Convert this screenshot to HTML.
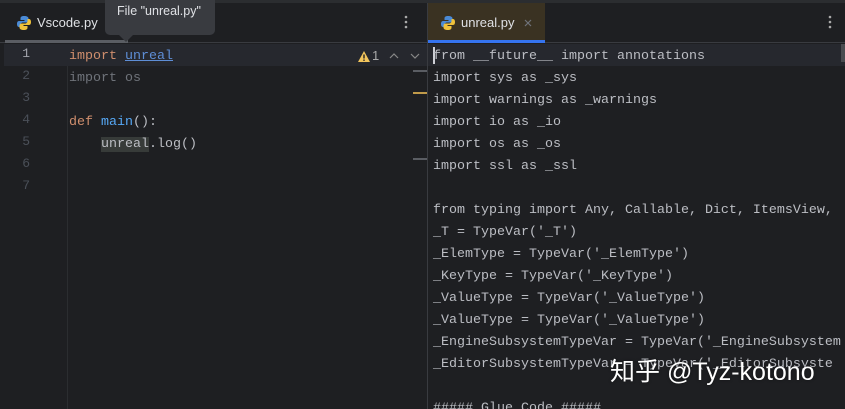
<!DOCTYPE html>
<html style="width:845px;height:409px;overflow:hidden"><head><meta charset="utf-8"><style>
*{margin:0;padding:0;box-sizing:border-box}
body{width:845px;height:409px;background:#1e1f22;overflow:hidden;position:relative;font-family:"Liberation Sans",sans-serif}
.mono{font-family:"Liberation Mono",monospace;font-size:13.33px;white-space:pre;color:#bcbec4}
.abs{position:absolute}
.ln{position:absolute;left:0;width:50px;text-align:right;color:#4b5059;font-family:"Liberation Mono",monospace;font-size:13px}
.kw{color:#cf8e6d}
.fn{color:#56a8f5}
.gr{color:#6f737a}
</style></head><body>
<div class="abs" style="left:0;top:0;width:845px;height:3px;background:#2b2d30"></div>
<div class="abs" style="left:0;top:42px;width:845px;height:1px;background:#393b40"></div>
<svg class="abs" style="left:16px;top:15px" width="16" height="16" viewBox="0 0 16 16"><path d="M8 1C5 1 4.5 2.3 4.5 3.5V5h4v1H3C1.5 6 1 7.5 1 9s.6 3 2 3h1.5v-2c0-1.4 1-2.5 2.5-2.5h3.5c1 0 2-.8 2-2V3.5C12.5 2 11 1 8 1z" fill="#4a8ad6"/><path d="M8 15c3 0 3.5-1.3 3.5-2.5V11h-4v-1H13c1.5 0 2-1.5 2-3s-.6-3-2-3h-1.5v2c0 1.4-1 2.5-2.5 2.5H5.5c-1 0-2 .8-2 2v2c0 1.5 1.5 2.5 4.5 2.5z" fill="#f0c23b"/></svg>
<div class="abs" style="left:37px;top:15px;color:#dfe1e5;font-size:13px">Vscode.py</div>
<div class="abs" style="left:5px;top:40px;width:123px;height:3px;background:#5a5d63"></div>
<svg class="abs" style="left:404px;top:15px" width="4" height="14"><circle cx="2" cy="2" r="1.3" fill="#aaa"/><circle cx="2" cy="7" r="1.3" fill="#aaa"/><circle cx="2" cy="12" r="1.3" fill="#aaa"/></svg>
<div class="abs" style="left:105px;top:0;width:110px;height:35px;background:#393b40;border-radius:0 0 5px 5px"></div>
<div class="abs" style="left:117px;top:4px;color:#dfe1e5;font-size:12.5px">File "unreal.py"</div>
<div class="abs" style="left:119px;top:35px;width:0;height:0;border-left:7px solid transparent;border-right:7px solid transparent;border-top:7px solid #393b40"></div>
<div class="abs" style="left:427px;top:3px;width:1px;height:406px;background:#393b40"></div>
<div class="abs" style="left:428px;top:3px;width:117px;height:37px;background:#3a3222"></div>
<div class="abs" style="left:428px;top:40px;width:117px;height:3px;background:#3574f0"></div>
<svg class="abs" style="left:440px;top:15px" width="16" height="16" viewBox="0 0 16 16"><path d="M8 1C5 1 4.5 2.3 4.5 3.5V5h4v1H3C1.5 6 1 7.5 1 9s.6 3 2 3h1.5v-2c0-1.4 1-2.5 2.5-2.5h3.5c1 0 2-.8 2-2V3.5C12.5 2 11 1 8 1z" fill="#4a8ad6"/><path d="M8 15c3 0 3.5-1.3 3.5-2.5V11h-4v-1H13c1.5 0 2-1.5 2-3s-.6-3-2-3h-1.5v2c0 1.4-1 2.5-2.5 2.5H5.5c-1 0-2 .8-2 2v2c0 1.5 1.5 2.5 4.5 2.5z" fill="#f0c23b"/></svg>
<div class="abs" style="left:461px;top:15px;color:#dfe1e5;font-size:13px">unreal.py</div>
<svg class="abs" style="left:524px;top:19px" width="8" height="8"><path d="M1 1L7 7M7 1L1 7" stroke="#6f737a" stroke-width="1.2"/></svg>
<svg class="abs" style="left:828px;top:15px" width="4" height="14"><circle cx="2" cy="2" r="1.3" fill="#aaa"/><circle cx="2" cy="7" r="1.3" fill="#aaa"/><circle cx="2" cy="12" r="1.3" fill="#aaa"/></svg>

<div class="abs" style="left:4px;top:44px;width:423px;height:22px;background:#26282e"></div>
<div class="abs" style="left:67px;top:66px;width:1px;height:343px;background:#2b2d30"></div>
<div class="ln" style="top:46px;left:-20px;color:#a1a3ab">1</div>
<div class="ln" style="top:68px;left:-20px">2</div>
<div class="ln" style="top:90px;left:-20px">3</div>
<div class="ln" style="top:112px;left:-20px">4</div>
<div class="ln" style="top:134px;left:-20px">5</div>
<div class="ln" style="top:156px;left:-20px">6</div>
<div class="ln" style="top:178px;left:-20px">7</div>
<div class="abs mono" style="left:69px;top:46px;line-height:22px"><span class="kw">import</span> <span style="color:#5e8ed6;text-decoration:underline">unreal</span>
<span class="gr">import os</span>

<span class="kw">def</span> <span class="fn">main</span>():
    <span style="background:#373b39">unreal</span>.log()</div>
<svg class="abs" style="left:357px;top:50px" width="14" height="13" viewBox="0 0 14 13"><path d="M7 1L13 12H1z" fill="#f2c55c"/><rect x="6.3" y="4.5" width="1.4" height="4" fill="#1e1f22"/><rect x="6.3" y="9.5" width="1.4" height="1.4" fill="#1e1f22"/></svg>
<div class="abs" style="left:372px;top:48px;color:#aaa;font-size:13px">1</div>
<svg class="abs" style="left:389px;top:53px" width="10" height="6"><path d="M1 5L5 1L9 5" stroke="#888" fill="none" stroke-width="1.2"/></svg>
<svg class="abs" style="left:410px;top:53px" width="10" height="6"><path d="M1 1L5 5L9 1" stroke="#888" fill="none" stroke-width="1.2"/></svg>
<div class="abs" style="left:413px;top:70px;width:14px;height:2px;background:#5a5d63"></div>
<div class="abs" style="left:413px;top:92px;width:14px;height:2px;background:#c09a4a"></div>
<div class="abs" style="left:413px;top:158px;width:14px;height:2px;background:#5a5d63"></div>

<div class="abs" style="left:428px;top:44px;width:417px;height:22px;background:#26282e"></div>
<div class="abs" style="left:433px;top:47px;width:1.5px;height:17px;background:#ced0d6"></div>
<div class="abs" style="left:841px;top:44px;width:4px;height:18px;background:#4a4c50"></div>
<div class="abs mono" style="left:433px;top:46px;line-height:22px">from __future__ import annotations
import sys as _sys
import warnings as _warnings
import io as _io
import os as _os
import ssl as _ssl

from typing import Any, Callable, Dict, ItemsView,
_T = TypeVar('_T')
_ElemType = TypeVar('_ElemType')
_KeyType = TypeVar('_KeyType')
_ValueType = TypeVar('_ValueType')
_ValueType = TypeVar('_ValueType')
_EngineSubsystemTypeVar = TypeVar('_EngineSubsystem
_EditorSubsystemTypeVar = TypeVar('_EditorSubsyste

##### Glue Code #####</div>
<div class="abs" style="left:610px;top:352px;color:#fff;font-size:25px;font-family:'Liberation Sans','Noto Sans CJK SC',sans-serif;text-shadow:0 0 3px rgba(0,0,0,.4)">知乎 @Tyz-kotono</div>
</body></html>
